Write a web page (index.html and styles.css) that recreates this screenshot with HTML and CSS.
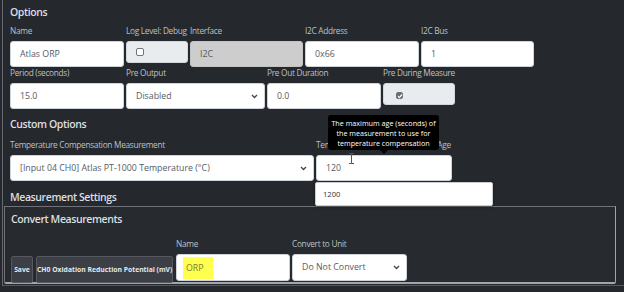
FILE: index.html
```html
<!DOCTYPE html>
<html lang="en">
<head>
    <meta charset="UTF-8">
    <title>Input Options</title>
    <link rel="stylesheet" href="styles.css">
</head>
<body>
    <div class="frame">
        <h3 class="section-title">Options</h3>
        <div class="form-row first">
            <div class="field w-name">
                <label>Name</label>
                <div class="input">Atlas ORP</div>
            </div>
            <div class="field w-check">
                <label>Log Level: Debug</label>
                <div class="check-box"><span class="checkbox"></span></div>
            </div>
            <div class="field w-iface">
                <label>Interface</label>
                <div class="input disabled">I2C</div>
            </div>
            <div class="field w-addr">
                <label>I2C Address</label>
                <div class="input">0x66</div>
            </div>
            <div class="field w-bus">
                <label>I2C Bus</label>
                <div class="input">1</div>
            </div>
        </div>
        <div class="form-row">
            <div class="field w-name">
                <label>Period (seconds)</label>
                <div class="input">15.0</div>
            </div>
            <div class="field w-preout">
                <label>Pre Output</label>
                <div class="input select">Disabled
                    <svg class="chev" width="7" height="5" viewBox="0 0 7 5"><path d="M1 1l2.5 2.5L6 1" fill="none" stroke="#444" stroke-width="1.3"/></svg>
                </div>
            </div>
            <div class="field w-dur">
                <label>Pre Out Duration</label>
                <div class="input">0.0</div>
            </div>
            <div class="field w-during">
                <label>Pre During Measure</label>
                <div class="check-box"><span class="checkbox checked">
                    <svg width="6" height="6" viewBox="0 0 6 6"><path d="M1 3.2l1.4 1.4L5 1.5" fill="none" stroke="#fff" stroke-width="1.2"/></svg>
                </span></div>
            </div>
        </div>

        <h3 class="section-title custom">Custom Options</h3>
        <div class="form-row custom-row">
            <div class="field w-meas">
                <label>Temperature Compensation Measurement</label>
                <div class="input select">[Input 04 CH0] Atlas PT-1000 Temperature (°C)
                    <svg class="chev" width="7" height="5" viewBox="0 0 7 5"><path d="M1 1l2.5 2.5L6 1" fill="none" stroke="#444" stroke-width="1.3"/></svg>
                </div>
            </div>
            <div class="field w-age">
                <label>Temperature Compensation Max Age</label>
                <div class="input">120</div>
                <div class="tooltip">The maximum age (seconds) of<br>the measurement to use for<br>temperature compensation</div>
                <svg class="cursor" width="7" height="11" viewBox="0 0 7 11"><path d="M1 0.5h2.5M3.5 0.5h2.5M3.5 0.5v10M1 10.5h2.5M3.5 10.5h2.5" fill="none" stroke="#555" stroke-width="1"/></svg>
                <div class="autocomplete">1200</div>
            </div>
        </div>

        <h3 class="section-title settings">Measurement Settings</h3>
        <div class="convert-panel">
            <h3 class="section-title">Convert Measurements</h3>
            <div class="convert-row">
                <button class="btn btn-save">Save</button>
                <button class="btn btn-channel">CH0 Oxidation Reduction Potential (mV)</button>
                <div class="field w-cname">
                    <label>Name</label>
                    <div class="input tall"><mark>ORP</mark></div>
                </div>
                <div class="field w-unit">
                    <label>Convert to Unit</label>
                    <div class="input tall select">Do Not Convert
                        <svg class="chev" width="7" height="5" viewBox="0 0 7 5"><path d="M1 1l2.5 2.5L6 1" fill="none" stroke="#444" stroke-width="1.3"/></svg>
                    </div>
                </div>
            </div>
        </div>
        <div class="next-btn"></div>
    </div>
</body>
</html>
```

FILE: styles.css
```css
body {
    margin: 0;
    background: #25282d;
    font-family: "Open Sans", "Noto Sans", sans-serif;
    color: #c3c6ca;
    overflow: hidden;
}
.frame {
    margin-left: 2px;
    width: 614px;
    height: 285px;
    border-left: 1px solid #676b71;
    border-right: 2px solid #a7aaae;
    border-bottom: 1px solid #55595f;
    padding-left: 7px;
    position: relative;
}
.section-title {
    margin: 0;
    padding-top: 4px;
    font-size: 10.5px;
    line-height: 16px;
    font-weight: 600;
    letter-spacing: -0.4px;
    color: #dcdfe2;
}
.section-title.custom {
    padding-top: 7px;
}
.section-title.settings {
    padding-top: 8px;
}
.form-row {
    display: flex;
    gap: 2px;
}
.form-row.first {
    margin-top: 5px;
}
.form-row.custom-row {
    margin-top: 7px;
}
.field {
    position: relative;
}
.field label {
    display: block;
    font-size: 8.3px;
    letter-spacing: -0.3px;
    line-height: 12px;
    height: 12px;
    margin-bottom: 4px;
    white-space: nowrap;
    color: #bcc0c4;
}
.input {
    position: relative;
    height: 26px;
    box-sizing: border-box;
    background: #fff;
    border: 1px solid #ced4da;
    border-radius: 3px;
    padding: 0 9px;
    font-size: 8.8px;
    line-height: 24px;
    color: #555b62;
    white-space: nowrap;
    overflow: hidden;
}
.input.disabled {
    background: #cdcdcd;
    border-color: #c4c4c4;
}
.input.select .chev {
    position: absolute;
    right: 6px;
    top: 10px;
}
.input.tall {
    height: 27px;
}
.check-box {
    height: 22px;
    box-sizing: border-box;
    background: #e9ecef;
    border: 1px solid #d3d7db;
    border-radius: 3px;
    padding: 6px 9px;
}
.checkbox {
    display: block;
    width: 8px;
    height: 8px;
    box-sizing: border-box;
    border: 1px solid #6e7379;
    border-radius: 2px;
    background: #fff;
}
.checkbox.checked {
    width: 7px;
    height: 7px;
    margin: 2px 0 0 2px;
    background: #6c6f73;
    border-color: #6c6f73;
}
.checkbox.checked svg {
    display: block;
    margin: -0.5px 0 0 -0.5px;
}
.w-name { width: 114px; }
.w-check { width: 62px; }
.w-iface { width: 113px; }
.w-addr { width: 114px; }
.w-bus { width: 113px; }
.w-preout { width: 139px; }
.w-dur { width: 114px; }
.w-during { width: 72px; }
.w-meas { width: 304px; }
.w-age { width: 136px; }
.w-cname { width: 114px; }
.w-unit { width: 115px; }
.w-during .check-box {
    padding: 6px 10px;
}
.tooltip {
    position: absolute;
    left: 12px;
    top: -24px;
    width: 111px;
    box-sizing: border-box;
    padding: 3px 0 2px;
    background: #000;
    color: #fff;
    border-radius: 3px;
    font-size: 7.2px;
    line-height: 10px;
    text-align: center;
    white-space: nowrap;
}
.tooltip::after {
    content: "";
    position: absolute;
    left: 52px;
    bottom: -4px;
    border-left: 4px solid transparent;
    border-right: 4px solid transparent;
    border-top: 4px solid #000;
}
.cursor {
    position: absolute;
    left: 32px;
    top: 14px;
}
.autocomplete {
    position: absolute;
    left: -1px;
    top: 43px;
    width: 178px;
    height: 24px;
    box-sizing: border-box;
    background: #fff;
    border: 1px solid #c9ccd0;
    border-radius: 2px;
    box-shadow: 0 1px 3px rgba(0,0,0,0.4);
    padding-left: 7px;
    font-size: 7.6px;
    line-height: 22px;
    color: #333;
    z-index: 2;
}
.convert-panel {
    margin: 1px 0 0 -6px;
    width: 612px;
    height: 78px;
    box-sizing: border-box;
    border: 1px solid #6f7379;
    border-right: 1px solid #a0a3a7;
    border-bottom: 2px solid #a3a6aa;
    background: #272a2f;
    padding: 0 0 0 6px;
    border-radius: 0 0 2px 2px;
}
.convert-row {
    display: flex;
    align-items: flex-end;
    gap: 3px;
    margin-top: 11px;
}
.btn {
    height: 27px;
    margin-bottom: -2px;
    padding: 0;
    background: #3c3f45;
    border: 1px solid #55595f;
    border-radius: 2px;
    color: #e6e7e9;
    font-family: inherit;
    font-size: 6.8px;
    font-weight: 700;
    white-space: nowrap;
}
.btn-save { width: 22px; }
.btn-channel { width: 137px; }
.w-unit { margin-left: -1px; }
mark {
    display: inline-block;
    background: #ffff4d;
    color: #7a7a3a;
    margin-left: -3px;
    padding: 0 9px 0 3px;
    line-height: 22px;
    vertical-align: middle;
}
.next-btn {
    position: absolute;
    left: 11px;
    top: 288px;
    width: 52px;
    height: 10px;
    background: #3c3f45;
    border: 1px solid #5e6167;
    border-radius: 2px;
}
```
